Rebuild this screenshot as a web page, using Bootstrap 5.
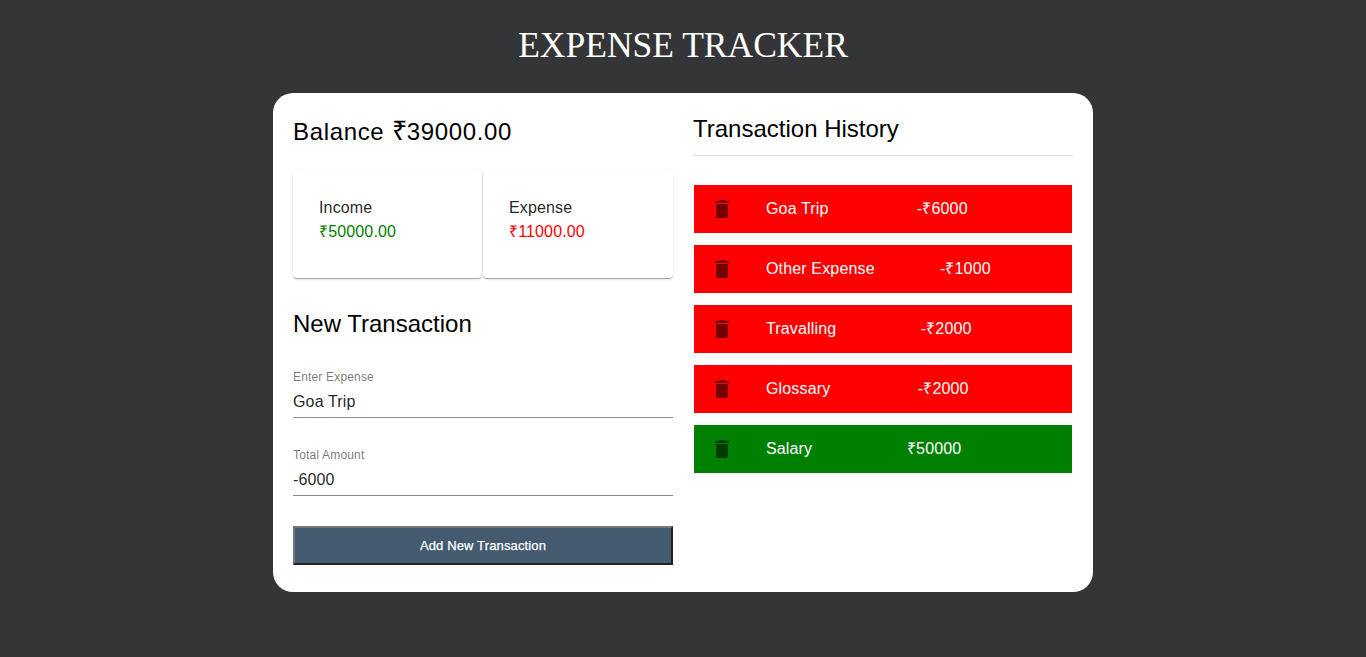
<!DOCTYPE html>
<html lang="en">
<head>
<meta charset="utf-8">
<title>Expense Tracker</title>
<link href="https://cdn.jsdelivr.net/npm/bootstrap@5.3.0/dist/css/bootstrap.min.css" rel="stylesheet">
<style>
html,body{height:100%}
body{background:#343536;font-family:"Liberation Sans",Arial,sans-serif;color:#000}
.app-title{font-family:"Liberation Serif","Times New Roman",serif;font-size:35.5px;line-height:41px;font-weight:400;color:#fff;margin:0;padding-top:25px;text-align:center}
.panel{width:820px;height:499px;margin:27px auto 0;background:#fff;border-radius:20px;padding:20px;gap:20px}
.side{width:380px;flex:none}
.sec-title{font-size:24px;line-height:28px;font-weight:400;margin:0}
.bal-title{margin-top:5px;letter-spacing:.66px}
.rs-big{font-size:27px;line-height:0;letter-spacing:0}
.sum-row{margin-top:24px;gap:1px;height:108px}
.sum-card{border:0;border-radius:4px;padding:26px;font-size:16px;line-height:24px;letter-spacing:.15px;box-shadow:0 2px 1px -1px rgba(0,0,0,.2),0 1px 1px 0 rgba(0,0,0,.14),0 1px 3px 0 rgba(0,0,0,.12)}
.sum-a{width:189px}
.sum-b{width:190px}
.sum-label{color:rgba(0,0,0,.87)}
.in-val{color:green}
.ex-val{color:#f00}
.new-title{margin-top:32px}
.fld{margin-top:32px}
.fld + .fld{margin-top:30px}
.fld-label{display:block;font-size:12px;line-height:14px;letter-spacing:.17px;margin:0;color:rgba(0,0,0,.54)}
.fld-input{display:block;width:100%;border:0;border-bottom:1px solid #8c8c8c;border-radius:0;padding:6px 0 3px;font-size:16px;line-height:24px;height:34px;letter-spacing:.15px;color:rgba(0,0,0,.87);background:transparent;outline:0;box-shadow:none}
.add-btn{display:block;width:100%;margin-top:30px;height:39px;padding:0;background:#445a6f;color:#fff;font-size:13px;font-weight:400;letter-spacing:.14px;-webkit-text-stroke:.25px #fff;border:2px solid;border-color:#767676 #212121 #212121 #767676;border-radius:0}
.hist-head{padding-top:2px;border-bottom:1px solid #e0e0e0;margin:0 0 29px;box-sizing:content-box;height:40px}
.tx-list{margin:0 1px;gap:12px;border-radius:0}
.tx-item{display:flex;align-items:center;height:48px;border:0;border-radius:0!important;padding:0 16px;color:#fff;font-size:16px;line-height:24px;letter-spacing:.15px}
.tx-neg{background:#f00}
.tx-pos{background:green}
.tx-icon{width:56px;flex:none;display:flex}
.tx-icon svg{width:24px;height:24px;fill:rgba(0,0,0,.54)}
.tx-text{flex:1 1 auto}
</style>
</head>
<body>
<h1 class="app-title">EXPENSE TRACKER</h1>
<main class="panel d-flex">
  <section class="side">
    <h2 class="sec-title bal-title">Balance <span class="rs-big">₹</span>39000.00</h2>
    <div class="sum-row d-flex">
      <div class="card sum-card sum-a">
        <div class="sum-label">Income</div>
        <div class="in-val">₹50000.00</div>
      </div>
      <div class="card sum-card sum-b">
        <div class="sum-label">Expense</div>
        <div class="ex-val">₹11000.00</div>
      </div>
    </div>
    <h2 class="sec-title new-title">New Transaction</h2>
    <form>
      <div class="fld">
        <label class="fld-label" for="t1">Enter Expense</label>
        <input class="fld-input" id="t1" type="text" value="Goa Trip">
      </div>
      <div class="fld">
        <label class="fld-label" for="t2">Total Amount</label>
        <input class="fld-input" id="t2" type="text" value="-6000">
      </div>
      <button class="add-btn" type="button">Add New Transaction</button>
    </form>
  </section>
  <section class="side">
    <h2 class="sec-title hist-head">Transaction History</h2>
    <ul class="list-group tx-list">
      <li class="list-group-item tx-item tx-neg"><span class="tx-icon"><svg viewBox="0 0 24 24"><path d="M6 19c0 1.1.9 2 2 2h8c1.1 0 2-.9 2-2V7H6v12zM19 4h-3.5l-1-1h-5l-1 1H5v2h14V4z"/></svg></span><span class="tx-text">Goa Trip</span><span class="tx-text">-₹6000</span></li>
      <li class="list-group-item tx-item tx-neg"><span class="tx-icon"><svg viewBox="0 0 24 24"><path d="M6 19c0 1.1.9 2 2 2h8c1.1 0 2-.9 2-2V7H6v12zM19 4h-3.5l-1-1h-5l-1 1H5v2h14V4z"/></svg></span><span class="tx-text">Other Expense</span><span class="tx-text">-₹1000</span></li>
      <li class="list-group-item tx-item tx-neg"><span class="tx-icon"><svg viewBox="0 0 24 24"><path d="M6 19c0 1.1.9 2 2 2h8c1.1 0 2-.9 2-2V7H6v12zM19 4h-3.5l-1-1h-5l-1 1H5v2h14V4z"/></svg></span><span class="tx-text">Travalling</span><span class="tx-text">-₹2000</span></li>
      <li class="list-group-item tx-item tx-neg"><span class="tx-icon"><svg viewBox="0 0 24 24"><path d="M6 19c0 1.1.9 2 2 2h8c1.1 0 2-.9 2-2V7H6v12zM19 4h-3.5l-1-1h-5l-1 1H5v2h14V4z"/></svg></span><span class="tx-text">Glossary</span><span class="tx-text">-₹2000</span></li>
      <li class="list-group-item tx-item tx-pos"><span class="tx-icon"><svg viewBox="0 0 24 24"><path d="M6 19c0 1.1.9 2 2 2h8c1.1 0 2-.9 2-2V7H6v12zM19 4h-3.5l-1-1h-5l-1 1H5v2h14V4z"/></svg></span><span class="tx-text">Salary</span><span class="tx-text">₹50000</span></li>
    </ul>
  </section>
</main>
<script src="https://cdn.jsdelivr.net/npm/bootstrap@5.3.0/dist/js/bootstrap.bundle.min.js"></script>
</body>
</html>
